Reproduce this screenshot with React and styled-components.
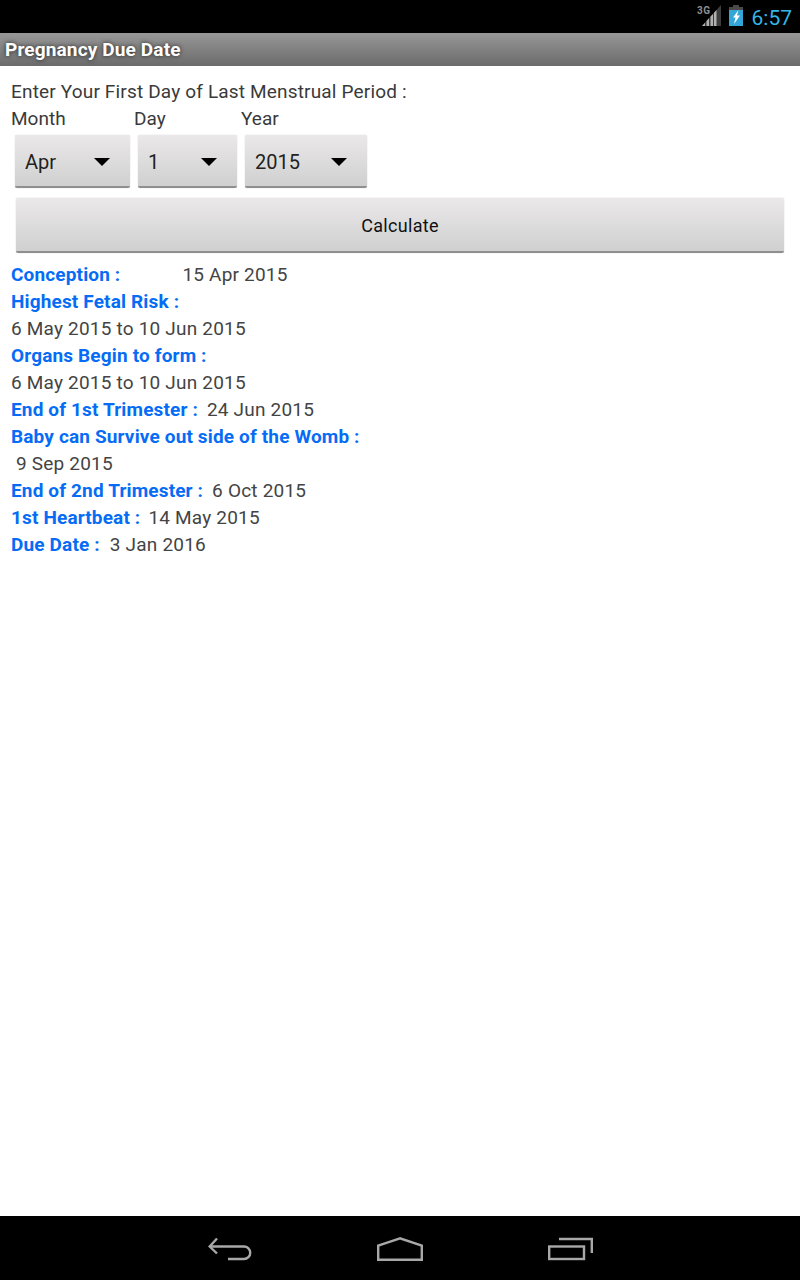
import React from "react";
import styled, { createGlobalStyle } from "styled-components";

const GlobalStyle = createGlobalStyle`
  html, body {
    margin: 0;
    padding: 0;
    background: #fff;
  }
  body {
    font-family: Roboto, "Liberation Sans", sans-serif;
  }
`;

const results = [
  { label: "Conception :", value: "15 Apr 2015", gap: 62 },
  { label: "Highest Fetal Risk :" },
  { value: "6 May 2015 to 10 Jun 2015" },
  { label: "Organs Begin to form :" },
  { value: "6 May 2015 to 10 Jun 2015" },
  { label: "End of 1st Trimester :", value: "24 Jun 2015", gap: 9 },
  { label: "Baby can Survive out side of the Womb :" },
  { value: "9 Sep 2015", gap: 5 },
  { label: "End of 2nd Trimester :", value: "6 Oct 2015", gap: 9 },
  { label: "1st Heartbeat :", value: "14 May 2015", gap: 8 },
  { label: "Due Date :", value: "3 Jan 2016", gap: 10 }
];

function SignalIcon() {
  return (
    <svg width="24" height="21" viewBox="0 0 24 21">
      <path d="M5 21 L24 0 V21 Z" fill="#3d3d3d" />
      <path d="M5 21 L8 17.7 V21 Z M9.5 21 V16 L12 13.3 V21 Z M13.5 21 V11.6 L16 8.9 V21 Z M17 21 V7.7 L19.5 5 V21 Z" fill="#b0b0b0" />
      <text x="0" y="9" fontFamily="Roboto, sans-serif" fontSize="10" fontWeight="700" letterSpacing="0.6" fill="#8f8f8f">
        3G
      </text>
    </svg>
  );
}

function BatteryIcon() {
  return (
    <svg width="16" height="21" viewBox="0 0 16 21">
      <rect x="5" y="0" width="6" height="2" fill="#4a4a4a" />
      <rect x="1" y="2" width="14" height="19" fill="#4a4a4a" />
      <rect x="1" y="5" width="14" height="16" fill="#33a5d6" />
      <path d="M10.5 5 L5 12.5 H7.5 L6 19 L12 10.5 H9 Z" fill="#fff" />
    </svg>
  );
}

function BackIcon() {
  return (
    <svg width="44" height="24" viewBox="0 0 44 24" fill="none" stroke="#a8a8a8" strokeWidth="2.4">
      <path d="M9 1.5 L1.7 9.5 L9 16.5" />
      <path d="M1.7 9.5 H36 A6 6 0 0 1 36 22 H20" />
    </svg>
  );
}

function HomeIcon() {
  return (
    <svg width="46" height="24" viewBox="0 0 46 24" fill="none" stroke="#a8a8a8" strokeWidth="2.4">
      <path d="M23 1.3 L1.2 8.5 V22.8 H44.8 V8.5 Z" />
    </svg>
  );
}

function RecentIcon() {
  return (
    <svg width="45" height="24" viewBox="0 0 45 24" fill="none" stroke="#a8a8a8" strokeWidth="2.4">
      <rect x="1.2" y="9.5" width="34.8" height="12.5" />
      <path d="M11 2 H43.8 V16" />
    </svg>
  );
}

function Spinner({ width, value, textWidth }) {
  return (
    <SpinnerBox $width={width}>
      <SpinnerValue $width={textWidth}>{value}</SpinnerValue>
      <Caret />
    </SpinnerBox>
  );
}

function App() {
  return (
    <Screen>
      <GlobalStyle />
      <StatusBar>
        <SignalIcon />
        <BatteryIcon />
        <Clock>6:57</Clock>
      </StatusBar>
      <TitleBar>Pregnancy Due Date</TitleBar>
      <Content>
        <Prompt>Enter Your First Day of Last Menstrual Period :</Prompt>
        <FieldLabels>
          <FieldLabel $width={123}>Month</FieldLabel>
          <FieldLabel $width={107}>Day</FieldLabel>
          <FieldLabel>Year</FieldLabel>
        </FieldLabels>
        <Spinners>
          <Spinner width={115} value="Apr" textWidth={69} />
          <Spinner width={99} value="1" textWidth={53} />
          <Spinner width={122} value="2015" textWidth={76} />
        </Spinners>
        <CalculateButton>Calculate</CalculateButton>
        <Results>
          {results.map((row, i) => (
            <ResultRow key={i}>
              {row.label && <ResultLabel>{row.label}</ResultLabel>}
              {row.value && <ResultValue $gap={row.gap || 0}>{row.value}</ResultValue>}
            </ResultRow>
          ))}
        </Results>
      </Content>
      <NavBar>
        <BackIcon />
        <HomeIcon />
        <RecentIcon />
      </NavBar>
    </Screen>
  );
}

const Screen = styled.div`
  display: flex;
  flex-direction: column;
  width: 800px;
  height: 1280px;
  overflow: hidden;
  background: #fff;
`;

const StatusBar = styled.div`
  display: flex;
  align-items: flex-start;
  justify-content: flex-end;
  height: 33px;
  padding: 5px 8px 0 0;
  background: #000;
  box-sizing: border-box;

  svg:first-child {
    margin-right: 7px;
  }
`;

const Clock = styled.span`
  margin-left: 8px;
  font-size: 21px;
  line-height: 26px;
  color: #33b5e5;
`;

const TitleBar = styled.div`
  height: 33px;
  padding-left: 5px;
  background: linear-gradient(#979797, #6b6b6b);
  color: #fff;
  font-size: 19px;
  font-weight: 700;
  letter-spacing: 0.15px;
  line-height: 33px;
  text-shadow: 0 0 4px #222;
`;

const Content = styled.div`
  display: flex;
  flex: 1;
  flex-direction: column;
  padding-top: 13px;
`;

const Prompt = styled.div`
  padding-left: 11px;
  font-size: 19px;
  line-height: 26px;
  letter-spacing: 0.17px;
  color: #3a3a3a;
`;

const FieldLabels = styled.div`
  display: flex;
  padding-left: 11px;
  margin-top: 1px;
`;

const FieldLabel = styled.div`
  width: ${(p) => (p.$width ? `${p.$width}px` : "auto")};
  font-size: 19px;
  line-height: 26px;
  color: #3a3a3a;
`;

const Spinners = styled.div`
  display: flex;
  gap: 8px;
  padding-left: 15px;
  margin-top: 3px;
`;

const SpinnerBox = styled.div`
  display: flex;
  align-items: center;
  width: ${(p) => p.$width}px;
  height: 53px;
  padding-left: 10px;
  box-sizing: border-box;
  background: linear-gradient(#ebe8e9, #d0d0d0);
  border-radius: 2px;
  border-bottom: 2px solid #8f8f8f;
  box-shadow: 0 0 1px #a5a5a5;
`;

const SpinnerValue = styled.span`
  width: ${(p) => p.$width}px;
  padding-top: 2px;
  font-size: 20px;
  color: #222;
`;

const Caret = styled.span`
  width: 0;
  height: 0;
  margin-top: 2px;
  border-left: 8px solid transparent;
  border-right: 8px solid transparent;
  border-top: 8px solid #000;
`;

const CalculateButton = styled.button`
  display: block;
  width: 768px;
  height: 55px;
  margin: 10px 0 0 16px;
  padding: 1px 0 0;
  border: 0;
  border-bottom: 2px solid #8f8f8f;
  border-radius: 2px;
  background: linear-gradient(#ebe8e9, #d0d0d0);
  box-shadow: 0 0 1px #a5a5a5;
  color: #111;
  font-family: Roboto, "Liberation Sans", sans-serif;
  font-size: 18px;
  letter-spacing: 0.3px;
`;

const Results = styled.div`
  display: flex;
  flex-direction: column;
  padding: 8px 0 0 11px;
`;

const ResultRow = styled.div`
  display: flex;
  height: 27px;
  font-size: 19px;
  line-height: 27px;
`;

const ResultLabel = styled.span`
  font-weight: 700;
  letter-spacing: 0.15px;
  color: #066cf5;
`;

const ResultValue = styled.span`
  margin-left: ${(p) => p.$gap}px;
  letter-spacing: 0.2px;
  color: #444;
`;

const NavBar = styled.div`
  display: flex;
  align-items: center;
  justify-content: center;
  gap: 125px;
  height: 64px;
  padding: 2px 0 0 1px;
  box-sizing: border-box;
  background: #000;
`;

export default App;
